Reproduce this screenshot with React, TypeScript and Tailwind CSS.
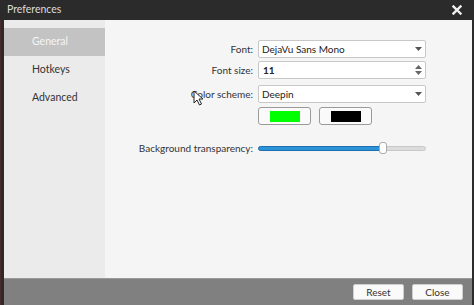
import React from "react";

const font = { fontFamily: 'Lato, "Noto Sans", sans-serif' };

const Caret = () => (
  <svg width="7" height="4" viewBox="0 0 7 4" className="text-[#555]">
    <path d="M0 0h7L3.5 4z" fill="currentColor" />
  </svg>
);

export default function App() {
  const labels = "text-[10px] text-[#333] text-right w-[140px] shrink-0 whitespace-nowrap";
  return (
    <div className="w-[474px] h-[305px] bg-[#2b2b2b] flex flex-col overflow-hidden" style={font}>
      {/* title bar */}
      <div className="h-[20px] flex items-center justify-between px-[7px] shrink-0">
        <span className="text-[10.5px] text-[#dcdcdc]">Preferences</span>
        <svg width="10" height="10" viewBox="0 0 10 10" className="mr-[5px]">
          <path d="M1.5 1.5l7 7M8.5 1.5l-7 7" stroke="#f0f0f0" strokeWidth="2.4" strokeLinecap="square" />
        </svg>
      </div>

      <div className="flex-1 flex flex-col pl-[3px] pr-[2px] bg-[#2b2b2b] border-l border-[#4a2a2a]">
        <div className="flex-1 flex bg-[#f5f5f5]">
          {/* sidebar */}
          <div className="w-[101px] bg-[#ebebeb] pt-[8px] flex flex-col text-[10.5px]">
            <div className="h-[28px] bg-[#c3c3c3] text-[#f5f5f5] flex items-center pl-[28px]">General</div>
            <div className="h-[28px] text-[#333] flex items-center pl-[28px]">Hotkeys</div>
            <div className="h-[28px] text-[#333] flex items-center pl-[28px]">Advanced</div>
          </div>

          {/* form */}
          <div className="flex-1 pt-[20px] pl-[8px] flex flex-col relative">
            <div className="flex items-center gap-[5px] h-[18px]">
              <span className={labels}>Font:</span>
              <div className="w-[168px] h-[18px] bg-white border border-[#c8c8c8] rounded-[2px] flex items-center justify-between px-[3px] text-[10px] text-[#222]">
                <span>DejaVu Sans Mono</span>
                <Caret />
              </div>
            </div>
            <div className="flex items-center gap-[5px] h-[18px] mt-[3px]">
              <span className={labels}>Font size:</span>
              <div className="w-[168px] h-[18px] bg-white border border-[#c8c8c8] rounded-[2px] flex items-center justify-between pl-[4px] pr-[2px] text-[10px] text-[#222] font-bold">
                <span>11</span>
                <div className="flex flex-col gap-[2px] pr-[1px]">
                  <svg width="7" height="4" viewBox="0 0 7 4"><path d="M0 4h7L3.5 0z" fill="#666" /></svg>
                  <svg width="7" height="4" viewBox="0 0 7 4"><path d="M0 0h7L3.5 4z" fill="#666" /></svg>
                </div>
              </div>
            </div>
            <div className="flex items-center gap-[5px] h-[18px] mt-[6px]">
              <span className={labels}>Color scheme:</span>
              <div className="w-[168px] h-[18px] bg-white border border-[#c8c8c8] rounded-[2px] flex items-center justify-between px-[3px] text-[10px] text-[#222]">
                <span>Deepin</span>
                <Caret />
              </div>
            </div>
            <div className="flex items-center gap-[8px] mt-[4px] pl-[145px]">
              <div className="w-[53px] h-[18px] bg-[#fafafa] border border-[#9a9a9a] rounded-[3px] flex items-center justify-center">
                <div className="w-[30px] h-[11px] bg-[#00ff00]" />
              </div>
              <div className="w-[53px] h-[18px] bg-[#fafafa] border border-[#9a9a9a] rounded-[3px] flex items-center justify-center">
                <div className="w-[30px] h-[11px] bg-black" />
              </div>
            </div>
            <div className="flex items-center gap-[5px] h-[18px] mt-[14px]">
              <span className={labels}>Background transparency:</span>
              <div className="relative w-[168px] h-[12px] flex items-center">
                <div className="w-full h-[5px] bg-[#dcdcdc] rounded-full border border-[#c8c8c8]" />
                <div className="absolute left-0 w-[125px] h-[5px] bg-[#2b93d8] rounded-full border border-[#1d6fae]" />
                <div className="absolute left-[121px] w-[8px] h-[12px] bg-white border border-[#aaa] rounded-[3px]" />
              </div>
            </div>

            {/* mouse pointer */}
            <svg width="11" height="16" viewBox="0 0 11 16" className="absolute left-[88px] top-[70px]">
              <path d="M1 1v12l3-3 2.5 5 2-1-2.5-5H10z" fill="#fff" stroke="#222" strokeWidth="1" strokeLinejoin="round" />
            </svg>
          </div>
        </div>

        {/* bottom bar */}
        <div className="h-[27px] bg-[#808080] border-t border-[#9a9a9a] flex items-center justify-end gap-[8px] pr-[9px] shrink-0">
          <button className="w-[51px] h-[16px] bg-[#fafafa] border border-[#cfcfcf] rounded-[2px] text-[10px] text-[#333] flex items-center justify-center">Reset</button>
          <button className="w-[51px] h-[16px] bg-[#fafafa] border border-[#cfcfcf] rounded-[2px] text-[10px] text-[#333] flex items-center justify-center">Close</button>
        </div>
      </div>
    </div>
  );
}
